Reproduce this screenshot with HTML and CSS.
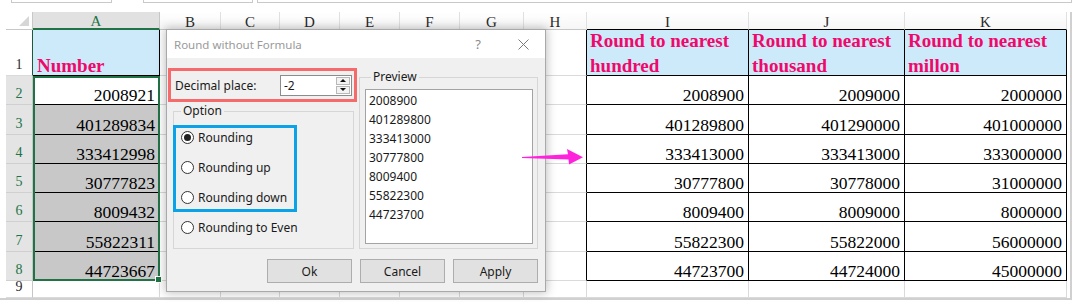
FILE: index.html
```html
<!DOCTYPE html>
<html>
<head>
<meta charset="utf-8">
<title>Round without Formula</title>
<link rel="stylesheet" href="styles.css">
</head>
<body>
<div class="page">
  <div class="topbar">
    <div class="tb b1"></div><div class="tb b2"></div><div class="tb b3"></div>
  </div>
  <div class="sheet">
    <div class="grid">
      <!-- header row -->
      <div class="corner"><span class="tri"></span></div>
      <div class="hd sel">A</div>
      <div class="hd">B</div>
      <div class="hd">C</div>
      <div class="hd">D</div>
      <div class="hd">E</div>
      <div class="hd">F</div>
      <div class="hd">G</div>
      <div class="hd">H</div>
      <div class="hd tt">I</div>
      <div class="hd tt">J</div>
      <div class="hd tt">K</div>
      <!-- row 1 -->
      <div class="rh rl">1</div>
      <div class="c t blue first"><span class="ht">Number</span></div>
      <div class="c"></div><div class="c"></div><div class="c"></div><div class="c"></div><div class="c"></div><div class="c"></div>
      <div class="c tl"></div>
      <div class="c t blue"><span class="ht">Round to nearest hundred</span></div>
      <div class="c t blue"><span class="ht">Round to nearest thousand</span></div>
      <div class="c t blue"><span class="ht">Round to nearest millon</span></div>
      <!-- row 2 -->
      <div class="rh sel">2</div>
      <div class="c t">2008921</div>
      <div class="c"></div><div class="c"></div><div class="c"></div><div class="c"></div><div class="c"></div><div class="c"></div>
      <div class="c tl"></div>
      <div class="c t">2008900</div><div class="c t">2009000</div><div class="c t">2000000</div>
      <!-- row 3 -->
      <div class="rh sel">3</div>
      <div class="c t gray">401289834</div>
      <div class="c"></div><div class="c"></div><div class="c"></div><div class="c"></div><div class="c"></div><div class="c"></div>
      <div class="c tl"></div>
      <div class="c t">401289800</div><div class="c t">401290000</div><div class="c t">401000000</div>
      <!-- row 4 -->
      <div class="rh sel">4</div>
      <div class="c t gray">333412998</div>
      <div class="c"></div><div class="c"></div><div class="c"></div><div class="c"></div><div class="c"></div><div class="c"></div>
      <div class="c tl"></div>
      <div class="c t">333413000</div><div class="c t">333413000</div><div class="c t">333000000</div>
      <!-- row 5 -->
      <div class="rh sel">5</div>
      <div class="c t gray">30777823</div>
      <div class="c"></div><div class="c"></div><div class="c"></div><div class="c"></div><div class="c"></div><div class="c"></div>
      <div class="c tl"></div>
      <div class="c t">30777800</div><div class="c t">30778000</div><div class="c t">31000000</div>
      <!-- row 6 -->
      <div class="rh sel">6</div>
      <div class="c t gray">8009432</div>
      <div class="c"></div><div class="c"></div><div class="c"></div><div class="c"></div><div class="c"></div><div class="c"></div>
      <div class="c tl"></div>
      <div class="c t">8009400</div><div class="c t">8009000</div><div class="c t">8000000</div>
      <!-- row 7 -->
      <div class="rh sel">7</div>
      <div class="c t gray">55822311</div>
      <div class="c"></div><div class="c"></div><div class="c"></div><div class="c"></div><div class="c"></div><div class="c"></div>
      <div class="c tl"></div>
      <div class="c t">55822300</div><div class="c t">55822000</div><div class="c t">56000000</div>
      <!-- row 8 -->
      <div class="rh sel">8</div>
      <div class="c t gray">44723667</div>
      <div class="c"></div><div class="c"></div><div class="c"></div><div class="c"></div><div class="c"></div><div class="c"></div>
      <div class="c tl"></div>
      <div class="c t">44723700</div><div class="c t">44724000</div><div class="c t">45000000</div>
      <!-- row 9 -->
      <div class="rh">9</div>
      <div class="c"></div><div class="c"></div><div class="c"></div><div class="c"></div><div class="c"></div><div class="c"></div>
      <div class="c"></div><div class="c"></div><div class="c"></div><div class="c"></div><div class="c"></div>
    </div>
    <div class="selection"><span class="handle"></span></div>
  </div>

  <div class="dialog">
    <div class="titlebar">
      <span class="title">Round without Formula</span>
      <span class="help">?</span>
      <span class="close"><svg width="11" height="11" viewBox="0 0 11 11"><path d="M0.5 0.5 L10.5 10.5 M10.5 0.5 L0.5 10.5" stroke="#7a7a7a" stroke-width="1" fill="none"/></svg></span>
    </div>
    <div class="body">
      <div class="top">
        <div class="left">
          <div class="redbox">
            <span class="label">Decimal place:</span>
            <div class="spin">
              <span class="val">-2</span>
              <span class="arrows">
                <span class="sbtn"><span class="up"></span></span>
                <span class="sbtn"><span class="down"></span></span>
              </span>
            </div>
          </div>
          <fieldset class="group optgroup">
            <legend>Option</legend>
            <div class="bluebox">
              <div class="radio"><span class="rb on"></span><span>Rounding</span></div>
              <div class="radio"><span class="rb"></span><span>Rounding up</span></div>
              <div class="radio"><span class="rb"></span><span>Rounding down</span></div>
            </div>
            <div class="radio even"><span class="rb"></span><span>Rounding to Even</span></div>
          </fieldset>
        </div>
        <div class="right">
          <fieldset class="group prevgroup">
            <legend>Preview</legend>
            <div class="listbox">
              <div>2008900</div>
              <div>401289800</div>
              <div>333413000</div>
              <div>30777800</div>
              <div>8009400</div>
              <div>55822300</div>
              <div>44723700</div>
            </div>
          </fieldset>
        </div>
      </div>
      <div class="buttons">
        <div class="btn">Ok</div>
        <div class="btn">Cancel</div>
        <div class="btn">Apply</div>
      </div>
    </div>
  </div>

  <svg class="arrow" width="66" height="22" viewBox="0 0 66 22">
    <polygon points="2,11 48,8.2 47,3 63,11.2 49,18.5 48.5,13.6 2,12" fill="#ff22dd"/>
  </svg>
</div>
</body>
</html>
```

FILE: styles.css
```css
html, body {
  margin: 0;
  padding: 0;
  background: #ffffff;
}

.page {
  position: relative;
  width: 1075px;
  height: 302px;
  overflow: hidden;
  background: #ffffff;
}

/* formula-bar remnants at the very top */
.topbar {
  height: 12px;
  width: 1072px;
  display: flex;
  padding-left: 11px;
  box-sizing: border-box;
}
.tb {
  height: 3px;
  box-sizing: border-box;
  border: 1px solid #c9c9c9;
  border-top: none;
  background: #fff;
}
.b1 { width: 101px; margin-right: 31px; }
.b2 { width: 110px; margin-right: 4px; }
.b3 { flex: 1; }

.sheet {
  position: relative;
  width: 1072px;
  height: 288px;
  box-sizing: border-box;
  padding-left: 6px;
  border-right: 2px solid #d0d0d0;
  border-bottom: 2px solid #d0d0d0;
}

.grid {
  display: grid;
  grid-template-columns: 27px 127px 61px 59px 60px 60px 60px 64px 63px 162px 156px 162px;
  grid-template-rows: 18px 46px 29px 30px 29px 29px 29px 30px 29px 17px;
  font-family: "Liberation Serif", "Times New Roman", serif;
  color: #000;
}

/* generic cell */
.c {
  box-sizing: border-box;
  border-right: 1px solid #dadada;
  border-bottom: 1px solid #dadada;
  display: flex;
  align-items: flex-end;
  justify-content: flex-end;
  padding: 0 4px 0 0;
  font-size: 17.5px;
  line-height: 18px;
  white-space: nowrap;
}
.c.t {
  border-right-color: #000;
  border-bottom-color: #000;
}
.c.tl {
  border-right-color: #000;
}
.c.gray {
  background: #c8c8c8;
}
.c.blue {
  background: #cdeafb;
  color: #f0086a;
  font-weight: bold;
  font-size: 19px;
  line-height: 25px;
  justify-content: flex-start;
  padding: 0 2px 0 3px;
  white-space: normal;
}
.c.blue.first { padding-left: 4px; }
.ht {
  margin-bottom: -3px;
}

/* column headers */
.corner {
  box-sizing: border-box;
  border-right: 1px solid #c8c8c8;
  border-bottom: 1px solid #c8c8c8;
  position: relative;
  background: #fff;
}
.tri {
  position: absolute;
  right: 3px;
  bottom: 3px;
  width: 0;
  height: 0;
  border-left: 10px solid transparent;
  border-bottom: 10px solid #d6d6d6;
}
.hd {
  box-sizing: border-box;
  border-right: 1px solid #e0e0e0;
  border-bottom: 1px solid #c6c6c6;
  background: linear-gradient(#ffffff, #f6f6f6);
  display: flex;
  align-items: center;
  justify-content: center;
  font-size: 15px;
  color: #2a2a2a;
  padding-top: 3px;
}
.hd.sel {
  background: #e1e1e1;
  color: #217346;
  border-bottom: 2px solid #217346;
  border-right-color: #c6c6c6;
}
.hd.tt {
  border-bottom-color: #000;
}

/* row headers */
.rh {
  box-sizing: border-box;
  border-right: 1px solid #c6c6c6;
  border-bottom: 1px solid #dadada;
  background: #fff;
  display: flex;
  align-items: flex-end;
  justify-content: center;
  font-size: 14px;
  line-height: 16px;
  padding-bottom: 2px;
  color: #2a2a2a;
}
.rh.rl {
  border-right-color: #1c5a3a;
}
.rh.sel {
  background: #e4e4e4;
  color: #217346;
  border-bottom-color: #d0d0d0;
}

/* selection frame over A2:A8 (overlay) */
.selection {
  position: absolute;
  left: 33px;
  top: 64px;
  width: 127px;
  height: 205px;
  box-sizing: border-box;
  border: 2px solid #217346;
  z-index: 2;
  pointer-events: none;
}
.handle {
  position: absolute;
  right: -4px;
  bottom: -4px;
  width: 5px;
  height: 5px;
  background: #217346;
  border: 1px solid #fff;
}

/* dialog */
.dialog {
  position: absolute;
  left: 166px;
  top: 29px;
  width: 380px;
  height: 263px;
  box-sizing: border-box;
  border: 1px solid #a9a9a9;
  background: #f0f0f0;
  box-shadow: 0 0 9px 1px rgba(0, 0, 0, 0.25);
  font-family: "Noto Sans", "Open Sans", sans-serif;
  font-size: 12px;
  color: #1a1a1a;
  display: flex;
  flex-direction: column;
  z-index: 5;
}
.titlebar {
  height: 28px;
  flex: none;
  background: #fff;
  display: flex;
  align-items: center;
  padding: 0 2px 0 7px;
  color: #9a9a9a;
  font-size: 11.5px;
}
.title { flex: 1; }
.help {
  width: 20px;
  text-align: center;
  margin-right: 15px;
  font-size: 13px;
  color: #8a8a8a;
}
.close {
  width: 40px;
  display: flex;
  justify-content: center;
  align-items: center;
}
.body {
  flex: 1;
  padding: 10px 7px 0 1px;
  display: flex;
  flex-direction: column;
}
.top {
  display: flex;
  gap: 2px;
  align-items: flex-start;
}
.left { width: 189px; }
.right { width: 179px; }

.redbox {
  height: 34px;
  box-sizing: border-box;
  border: 3px solid #f56b6b;
  display: flex;
  align-items: center;
  padding: 0 2px 0 4px;
}
.label { flex: 1; }
.spin {
  width: 72px;
  height: 21px;
  box-sizing: border-box;
  border: 1px solid #8c8c8c;
  background: #fff;
  display: flex;
}
.val {
  flex: 1;
  padding-left: 3px;
  line-height: 19px;
}
.arrows {
  width: 15px;
  display: flex;
  flex-direction: column;
  padding: 1px 1px 1px 0;
  box-sizing: border-box;
  gap: 1px;
}
.sbtn {
  flex: 1;
  box-sizing: border-box;
  border: 1px solid #b8b8b8;
  background: #f3f3f3;
  display: flex;
  align-items: center;
  justify-content: center;
}
.up {
  width: 0; height: 0;
  border-left: 3px solid transparent;
  border-right: 3px solid transparent;
  border-bottom: 3px solid #111;
}
.down {
  width: 0; height: 0;
  border-left: 3px solid transparent;
  border-right: 3px solid transparent;
  border-top: 3px solid #111;
}

.group {
  margin: 0;
  border: 1px solid #d6d6d6;
  box-sizing: border-box;
  min-width: 0;
}
.group legend {
  padding: 0 2px;
  line-height: 16px;
  font-size: 12px;
}
.optgroup {
  margin: 1px 3px 0 5px;
  width: 181px;
  padding: 6px 0 12px 0;
}
.optgroup legend { margin-left: 7px; }
.prevgroup {
  margin-top: 1px;
  width: 179px;
  padding: 4px 4px 4px 5px;
}
.prevgroup legend { margin-left: 6px; }

.bluebox {
  margin-left: -1px;
  width: 124px;
  box-sizing: border-box;
  border: 3px solid #0ba2e8;
  padding: 0 0 3px 5px;
  display: flex;
  flex-direction: column;
  gap: 12px;
}
.radio {
  height: 18px;
  display: flex;
  align-items: center;
  gap: 4px;
}
.rb {
  width: 13px;
  height: 13px;
  box-sizing: border-box;
  border: 1px solid #333;
  border-radius: 50%;
  background: #fff;
  display: flex;
  align-items: center;
  justify-content: center;
}
.rb.on::after {
  content: "";
  width: 7px;
  height: 7px;
  border-radius: 50%;
  background: #222;
}
.even {
  margin-top: 6px;
  padding-left: 7px;
}

.listbox {
  height: 155px;
  box-sizing: border-box;
  background: #fff;
  border: 1px solid #a3a3a3;
  padding: 1px 3px;
  line-height: 19px;
}

.buttons {
  display: flex;
  justify-content: flex-end;
  gap: 8px;
  margin-top: 10px;
}
.btn {
  width: 85px;
  height: 24px;
  box-sizing: border-box;
  background: #e1e1e1;
  border: 1px solid #adadad;
  display: flex;
  align-items: center;
  justify-content: center;
}

.arrow {
  position: absolute;
  left: 520px;
  top: 146px;
  z-index: 6;
}
```
